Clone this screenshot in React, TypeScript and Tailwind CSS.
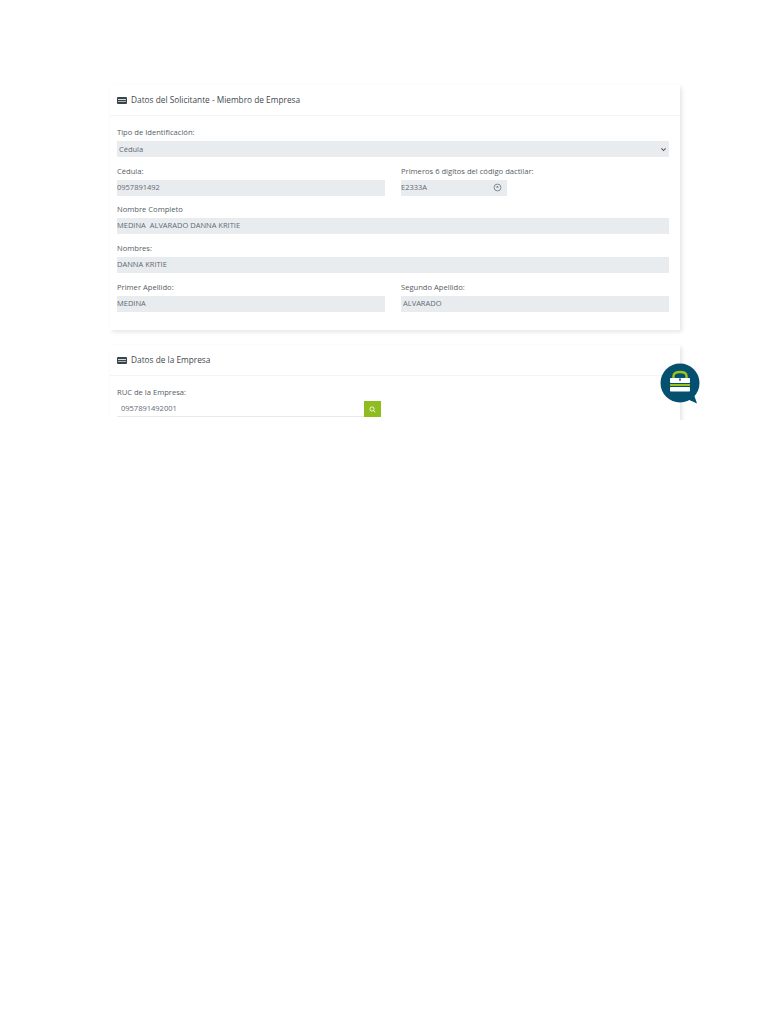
import React from "react";

function Label({ children }: { children: React.ReactNode }) {
  return <div className="h-[16px] text-[7.6px] leading-[14px] text-[#555c63] whitespace-nowrap">{children}</div>;
}

function Field({ children, className = "" }: { children?: React.ReactNode; className?: string }) {
  return (
    <div className={`h-[16px] bg-[#e9ecef] text-[7.5px] leading-[15px] text-[#5f6972] whitespace-nowrap ${className}`}>
      {children}
    </div>
  );
}

function CardIcon() {
  return (
    <svg width="10" height="7" viewBox="0 0 10 7" className="shrink-0">
      <rect x="0" y="0" width="10" height="7" rx="1" fill="#3a454b" />
      <rect x="1" y="2" width="8" height="1" fill="#d8dcde" />
      <rect x="1" y="4" width="8" height="1" fill="#aeb4b8" />
    </svg>
  );
}

function Header({ title }: { title: string }) {
  return (
    <div className="h-[31px] flex items-center gap-[4px] pl-[7px] border-b border-[#f3f4f5]">
      <CardIcon />
      <span className="text-[8.3px] font-medium text-[#3f494f] whitespace-nowrap">{title}</span>
    </div>
  );
}

function Logo() {
  return (
    <svg width="42" height="44" viewBox="0 0 42 44" className="absolute left-[660px] top-[362px]">
      <circle cx="20" cy="21" r="19.5" fill="#06506f" />
      <path d="M27 37 L37 41.5 L33 30 Z" fill="#06506f" />
      <path d="M13.5 16 V14 Q13.5 10 20 10 Q26.5 10 26.5 14 V16" fill="none" stroke="#9bc31c" strokeWidth="2.4" />
      <rect x="10" y="16" width="20" height="5" rx="0.8" fill="#ffffff" />
      <rect x="19.2" y="16.5" width="1.6" height="2.2" fill="#06506f" />
      <path d="M10 22 H30 V24 H10 Z" fill="#9bc31c" />
      <rect x="10" y="25" width="20" height="4.5" rx="0.8" fill="#ffffff" />
    </svg>
  );
}

export default function App() {
  return (
    <div className="relative w-[768px] h-[1024px] bg-white overflow-hidden" style={{ fontFamily: '"Open Sans", sans-serif' }}>
      <div className="pt-[85px] pl-[110px] h-[420px] overflow-hidden pr-[84px]">
        <div className="w-[570px] h-[245px] bg-white shadow-[2px_2px_4px_rgba(0,0,0,0.1)]">
          <Header title="Datos del Solicitante - Miembro de Empresa" />
          <div className="pt-[9px] pl-[7px] pr-[11px] flex flex-col gap-[6.67px]">
            <div>
              <Label>Tipo de Identificación:</Label>
              <Field className="pl-[2px] flex items-center justify-between pr-[2px]">
                <span>Cédula</span>
                <svg width="7" height="7" viewBox="0 0 10 10" fill="none" stroke="#555" strokeWidth="1.5"><path d="M2 3.5 L5 6.5 L8 3.5" /></svg>
              </Field>
            </div>
            <div className="flex gap-[16px]">
              <div className="w-[268px]">
                <Label>Cédula:</Label>
                <Field>0957891492</Field>
              </div>
              <div className="flex-1">
                <Label>Primeros 6 dígitos del código dactilar:</Label>
                <Field className="w-[106px] flex items-center justify-between pr-[4px]">
                  <span>E2333A</span>
                  <svg width="9" height="9" viewBox="0 0 10 10" fill="none" stroke="#59646e" strokeWidth="0.8" className="mr-[1px]">
                    <circle cx="5" cy="5" r="3.8" />
                    <path d="M3.4 4.6 H6.2 M5 3.4 V4.6" />
                  </svg>
                </Field>
              </div>
            </div>
            <div>
              <Label>Nombre Completo</Label>
              <Field className="whitespace-pre">MEDINA  ALVARADO DANNA KRITIE</Field>
            </div>
            <div>
              <Label>Nombres:</Label>
              <Field>DANNA KRITIE</Field>
            </div>
            <div className="flex gap-[16px]">
              <div className="w-[268px]">
                <Label>Primer Apellido:</Label>
                <Field>MEDINA</Field>
              </div>
              <div className="flex-1">
                <Label>Segundo Apellido:</Label>
                <Field className="pl-[2px]">ALVARADO</Field>
              </div>
            </div>
          </div>
        </div>
        <div className="mt-[15px] w-[570px] h-[200px] bg-white shadow-[2px_2px_4px_rgba(0,0,0,0.1)]">
          <Header title="Datos de la Empresa" />
          <div className="pt-[9px] pl-[7px]">
            <Label>RUC de la Empresa:</Label>
            <div className="w-[264px] h-[16px] flex justify-between border-b border-[#e6e8ea]">
              <span className="pl-[4px] text-[7.5px] leading-[15px] text-[#5f6972]">0957891492001</span>
              <div className="w-[17px] h-[16px] bg-[#8fbc1e] flex items-center justify-center">
                <svg width="7" height="7" viewBox="0 0 10 10" fill="none" stroke="#ffffff" strokeWidth="1.2">
                  <circle cx="4.3" cy="4.3" r="3" />
                  <path d="M6.6 6.6 L9 9" />
                </svg>
              </div>
            </div>
          </div>
        </div>
      </div>
      <Logo />
    </div>
  );
}
